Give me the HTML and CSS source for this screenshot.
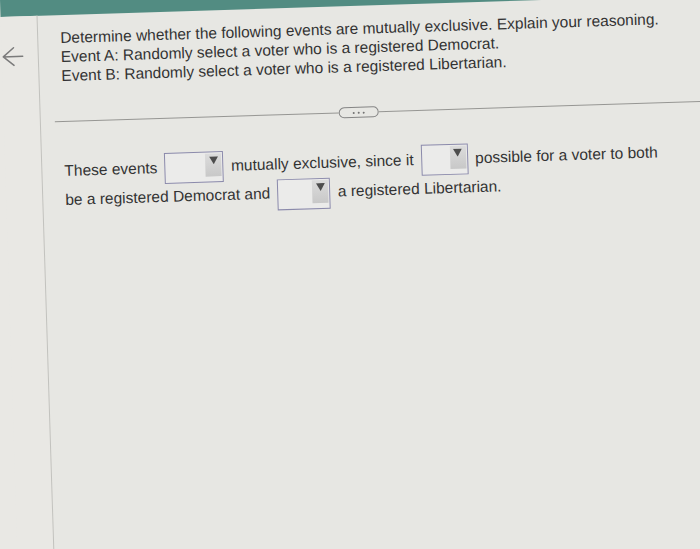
FILE: index.html
```html
<!DOCTYPE html>
<html lang="en">
<head>
<meta charset="utf-8">
<title>Mutually exclusive events</title>
<link rel="stylesheet" href="styles.css">
</head>
<body>
<div class="frame">
<div class="screen">
  <div class="topbar"></div>
  <div class="body-row">
    <aside class="side">
      <svg class="back" viewBox="0 0 22 20" width="22" height="20" aria-hidden="true">
        <path d="M21 10H1.5M12 1.2L1.5 10L12 18.8" fill="none" stroke="#7b7b7b" stroke-width="1.5" stroke-linecap="round" stroke-linejoin="round"/>
      </svg>
    </aside>
    <main class="content">
      <div class="question">
        <p>Determine whether the following events are mutually exclusive. Explain your reasoning.</p>
        <p>Event A: Randomly select a voter who is a registered Democrat.</p>
        <p>Event B: Randomly select a voter who is a registered Libertarian.</p>
      </div>
      <div class="divider">
        <span class="rule rule-left"></span>
        <span class="more"><span class="dot"></span><span class="dot"></span><span class="dot"></span></span>
        <span class="rule rule-right"></span>
      </div>
      <p class="answer">These events <span class="dd dd-a"><span class="dd-btn"><svg viewBox="0 0 9 8" width="9" height="8" aria-hidden="true"><path d="M0 0H9L4.5 8Z" fill="#4d4d4d"/></svg></span></span> mutually exclusive, since it <span class="dd dd-b"><span class="dd-btn"><svg viewBox="0 0 9 8" width="9" height="8" aria-hidden="true"><path d="M0 0H9L4.5 8Z" fill="#4d4d4d"/></svg></span></span> possible for a voter to both be a registered Democrat and <span class="dd dd-c"><span class="dd-btn"><svg viewBox="0 0 9 8" width="9" height="8" aria-hidden="true"><path d="M0 0H9L4.5 8Z" fill="#4d4d4d"/></svg></span></span> a registered Libertarian.</p>
    </main>
  </div>
</div>
</div>
</body>
</html>
```
FILE: styles.css
```css
html, body {
  margin: 0;
  height: 100%;
  overflow: hidden;
  background: #e9e8e4;
}

.frame {
  width: 700px;
  height: 549px;
  overflow: hidden;
  background: #e9e8e4;
}

.screen {
  width: 770px;
  height: 640px;
  transform: rotate(-1.8deg);
  transform-origin: 0 0;
  display: flex;
  flex-direction: column;
  background: #e7e7e3;
  font-family: "Liberation Sans", Arial, sans-serif;
  color: #333333;
}

.topbar {
  flex: none;
  height: 17px;
  background: #528c82;
}

.body-row {
  flex: 1;
  display: flex;
}

.side {
  flex: none;
  width: 36px;
  padding-top: 30px;
  border-right: 1px solid #c2c2be;
  background: #e9e8e4;
}

.back {
  display: block;
}

.content {
  flex: 1;
  padding-left: 14px;
}

.question {
  padding-top: 13px;
  padding-left: 8px;
  font-size: 15.5px;
  line-height: 19px;
}

.question p {
  margin: 0;
}

.divider {
  display: flex;
  align-items: center;
  height: 11px;
  margin-top: 31px;
}

.rule {
  height: 1px;
  background: #969693;
}

.rule-left {
  width: 284px;
}

.rule-right {
  flex: 1;
}

.more {
  flex: none;
  box-sizing: border-box;
  width: 40px;
  height: 11px;
  border: 1.4px solid #858585;
  border-radius: 6px;
  display: flex;
  align-items: center;
  justify-content: center;
  gap: 3px;
}

.dot {
  width: 2px;
  height: 2px;
  border-radius: 1px;
  background: #737373;
}

.answer {
  margin: 29px 0 0;
  padding-left: 8px;
  max-width: 610px;
  font-size: 15.5px;
  line-height: 29px;
}

.dd {
  display: inline-flex;
  vertical-align: middle;
  box-sizing: border-box;
  height: 31px;
  margin: -2px 3px;
  padding: 1px;
  border: 1.6px solid #8b8aab;
  background: #ebebea;
  justify-content: flex-end;
  align-items: flex-start;
}

.dd-a { width: 59px; }
.dd-b { width: 47px; }
.dd-c { width: 53px; }

.dd-btn {
  width: 16px;
  height: 23px;
  box-sizing: border-box;
  padding-top: 3px;
  display: flex;
  justify-content: center;
  align-items: flex-start;
  background: linear-gradient(#dcdcdc, #c8c8c8);
}

.dd-btn svg {
  display: block;
}
```
